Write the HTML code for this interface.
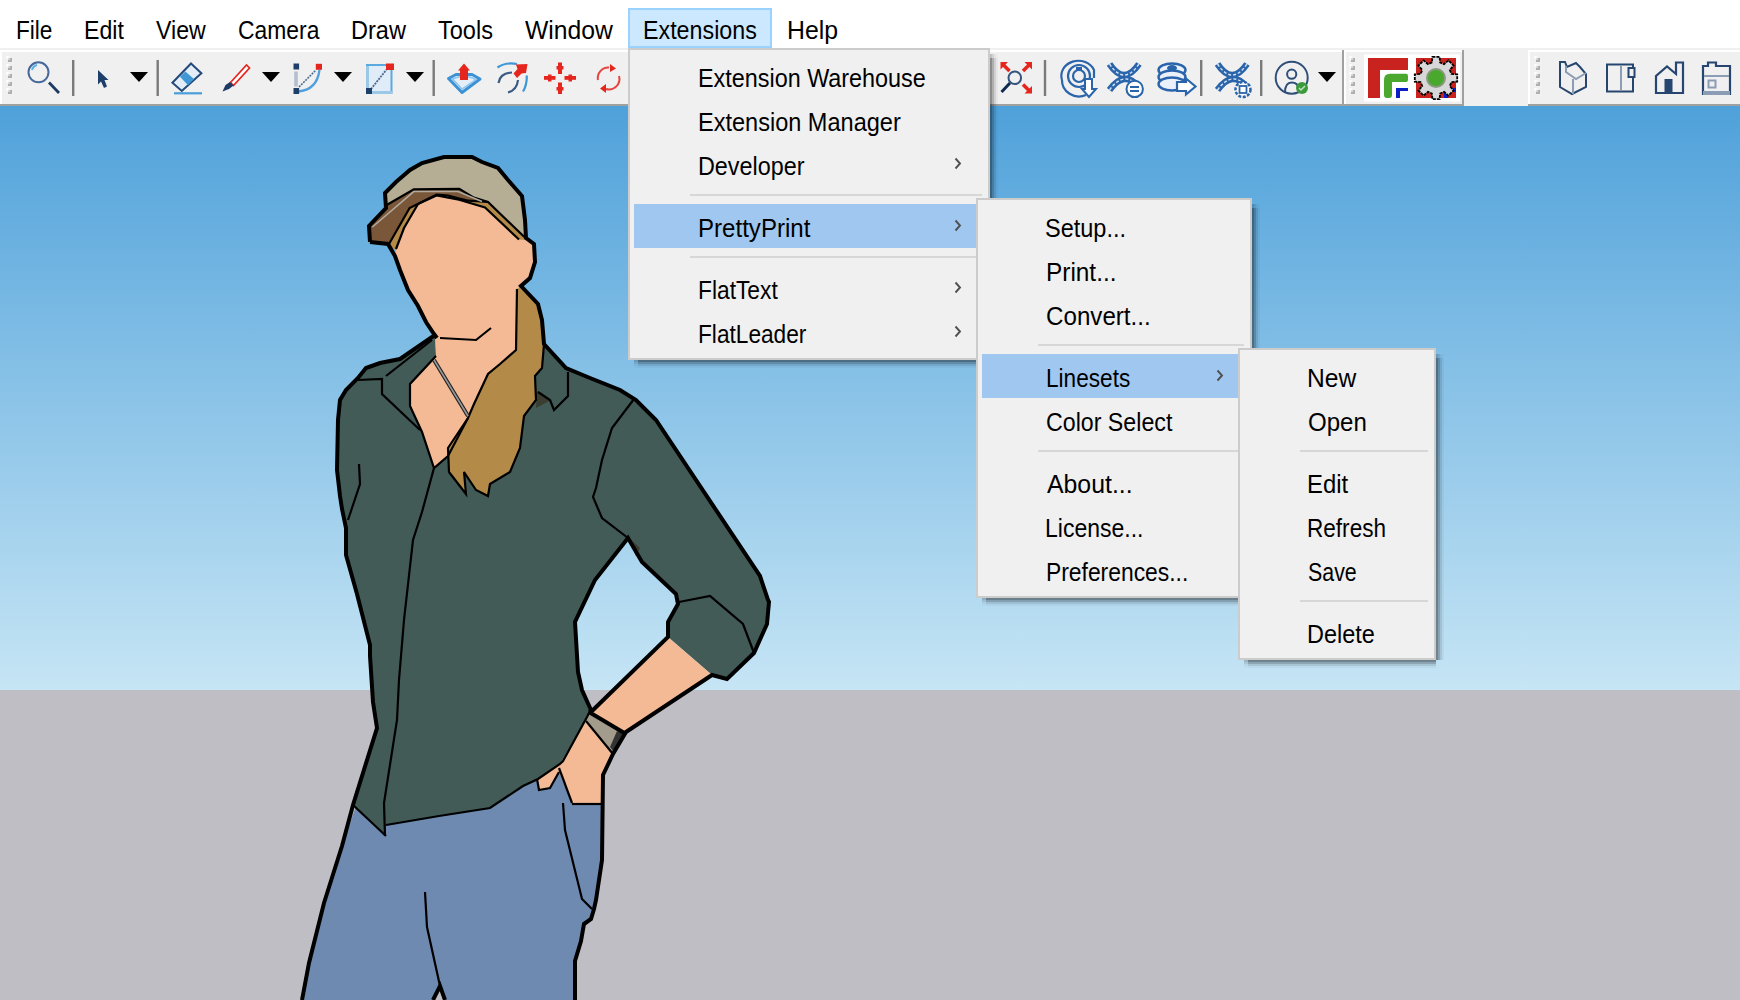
<!DOCTYPE html>
<html><head><meta charset="utf-8">
<style>
*{margin:0;padding:0;box-sizing:border-box}
html,body{width:1740px;height:1000px;overflow:hidden;background:#fff;font-family:"Liberation Sans",sans-serif;color:#000}
.a{position:absolute}
#sky{position:absolute;left:0;top:106px;width:1740px;height:584px;background:linear-gradient(#4fa1da,#c6e5f5)}
#ground{position:absolute;left:0;top:690px;width:1740px;height:310px;background:#bfbec4}
.t{position:absolute;font-size:26px;line-height:30px;white-space:pre;transform-origin:0 0;transform:scaleX(0.9)}
.tb{position:absolute;top:52px;height:52px;background:#f0f0f0}
.tbl{position:absolute;top:104px;height:2px;background:#a0a0a0}
.menu{position:absolute;background:#f0f0f0;border:2px solid #ccc}
.sh{position:absolute;background:rgba(0,0,0,0.35);filter:blur(3px)}
.hl{position:absolute;background:#9fc7f0}
.sep{position:absolute;height:2px;background:#d7d7d7}
.arr{position:absolute;width:12px;height:14px}
</style></head><body>
<div id="sky"></div>
<div id="ground"></div>

<!-- menubar -->
<div class="a" style="left:0;top:48px;width:1740px;height:2px;background:#f0f0f0"></div>
<div class="a" style="left:628px;top:8px;width:144px;height:40px;background:#cce8ff;border:2px solid #99d1ff"></div>
<div class="t" style="left:16.3px;top:15px;transform:scaleX(0.870)">File</div>
<div class="t" style="left:84.3px;top:15px;transform:scaleX(0.890)">Edit</div>
<div class="t" style="left:156.2px;top:15px;transform:scaleX(0.890)">View</div>
<div class="t" style="left:238.0px;top:15px;transform:scaleX(0.880)">Camera</div>
<div class="t" style="left:351.2px;top:15px;transform:scaleX(0.905)">Draw</div>
<div class="t" style="left:437.8px;top:15px;transform:scaleX(0.905)">Tools</div>
<div class="t" style="left:524.8px;top:15px;transform:scaleX(0.950)">Window</div>
<div class="t" style="left:643.2px;top:15px;transform:scaleX(0.895)">Extensions</div>
<div class="t" style="left:787.0px;top:15px;transform:scaleX(0.955)">Help</div>

<!-- toolbars -->
<div class="tb" style="left:2px;width:1340px"></div>
<div class="tbl" style="left:0;width:1344px"></div>
<div class="a" style="left:1342px;top:50px;width:2px;height:56px;background:#a0a0a0"></div>
<div class="tb" style="left:1346px;width:116px"></div>
<div class="tbl" style="left:1344px;width:120px"></div>
<div class="a" style="left:1462px;top:50px;width:2px;height:56px;background:#a0a0a0"></div>
<div class="a" style="left:1464px;top:50px;width:64px;height:56px;background:#f0f0f0"></div>
<div class="tb" style="left:1530px;width:210px"></div>
<div class="tbl" style="left:1528px;width:212px"></div>
<svg class="a" style="left:0;top:0" width="1740" height="110" viewBox="0 0 1740 110">
<rect x="6" y="56" width="3" height="3" fill="#fafafa"/>
<rect x="8" y="58" width="4" height="4" fill="#b0b0b0"/>
<rect x="8" y="58" width="2" height="2" fill="#d8d8d8"/>
<rect x="6" y="64" width="3" height="3" fill="#fafafa"/>
<rect x="8" y="66" width="4" height="4" fill="#b0b0b0"/>
<rect x="8" y="66" width="2" height="2" fill="#d8d8d8"/>
<rect x="6" y="72" width="3" height="3" fill="#fafafa"/>
<rect x="8" y="74" width="4" height="4" fill="#b0b0b0"/>
<rect x="8" y="74" width="2" height="2" fill="#d8d8d8"/>
<rect x="6" y="80" width="3" height="3" fill="#fafafa"/>
<rect x="8" y="82" width="4" height="4" fill="#b0b0b0"/>
<rect x="8" y="82" width="2" height="2" fill="#d8d8d8"/>
<rect x="6" y="88" width="3" height="3" fill="#fafafa"/>
<rect x="8" y="90" width="4" height="4" fill="#b0b0b0"/>
<rect x="8" y="90" width="2" height="2" fill="#d8d8d8"/>
<circle cx="38.5" cy="72.3" r="10" fill="none" stroke="#46689a" stroke-width="2"/>
<path d="M32,70 A7,7 0 0 1 37,65" fill="none" stroke="#5aaee6" stroke-width="2"/>
<line x1="49" y1="82.5" x2="59" y2="93" stroke="#1c3a64" stroke-width="2.8"/>
<rect x="72" y="60" width="2.4" height="36" fill="#7a7a7a"/>
<polygon points="98,70 98,84.5 101,81.5 104,88 107,86.5 104.5,80 108.5,80" fill="#1f3f6b"/>
<polygon points="130,72 148,72 139,82" fill="#000"/>
<rect x="156.5" y="60" width="2.4" height="36" fill="#7a7a7a"/>
<polygon points="191,63.5 201.4,73.2 181.8,91 172.4,82.7" fill="#e2edf8" stroke="#23497a" stroke-width="2"/>
<polygon points="185.3,71.5 194,79 188,85.3 180,76.7" fill="#3f97d6"/>
<rect x="174" y="92.2" width="28" height="2.2" fill="#4a9fdb"/>
<polygon points="230.5,82.5 246.5,65 249.5,68 233.5,85.5" fill="#fff" stroke="#e5261e" stroke-width="1.7"/>
<polygon points="222.5,91.5 225.5,85 230,82 233.5,85.5 229,89" fill="#1c3a64"/>
<polygon points="262,72 280,72 271,82" fill="#000"/>
<rect x="294.2" y="71.5" width="3.6" height="15" fill="#b4c0d0"/>
<line x1="299" y1="87" x2="316" y2="70" stroke="#4a6a90" stroke-width="1.6" stroke-dasharray="2,1"/>
<path d="M298,91.5 Q317,90 319.5,70" fill="none" stroke="#4fa0dc" stroke-width="2.3"/>
<rect x="293.5" y="63.5" width="5.6" height="6" fill="#1f3f6b"/>
<rect x="293.5" y="88" width="5.6" height="6" fill="#1f3f6b"/>
<rect x="315.8" y="63.8" width="6.2" height="6" fill="#e5261e"/>
<polygon points="334,72 352,72 343,82" fill="#000"/>
<rect x="367" y="65" width="24.5" height="28" fill="#e0ecf8" stroke="#5aaae0" stroke-width="2"/>
<rect x="366" y="66" width="3" height="27" fill="#9cc8e8"/>
<rect x="366" y="91" width="26" height="3" fill="#9cc8e8"/>
<line x1="371" y1="89" x2="387" y2="69" stroke="#4a6a90" stroke-width="1.8" stroke-dasharray="2,1"/>
<rect x="366" y="88" width="6" height="6" fill="#1f3f6b"/>
<rect x="386" y="63.5" width="8" height="6.5" fill="#e5261e"/>
<polygon points="406,72 424,72 415,82" fill="#000"/>
<rect x="432.5" y="60" width="2.4" height="36" fill="#7a7a7a"/>
<polygon points="448.5,78.5 456,74.5 472,74.5 480,79 462,92.5" fill="#e4eff9" stroke="#3d92d6" stroke-width="3" stroke-linejoin="round"/>
<polygon points="452.5,79 458,77 470,77 476,79.5 462,89" fill="none" stroke="#8cc4ec" stroke-width="1.5"/>
<polygon points="464,63.5 470,70.5 468,70.5 468,80 460,80 460,70.5 458,70.5" fill="#e5261e"/>
<path d="M497.5,67.5 Q505,62 517,64" fill="none" stroke="#3f97d6" stroke-width="2.2"/>
<path d="M498.5,83 Q500,73 512,72.5" fill="none" stroke="#3a5a85" stroke-width="2.2"/>
<path d="M508,92.5 Q517,90 518,80" fill="none" stroke="#3a5a85" stroke-width="2.2"/>
<path d="M523,91.5 Q527,85 526.8,75.5" fill="none" stroke="#3f97d6" stroke-width="2.2"/>
<polygon points="516,64.5 527.5,64 526,73 521.5,73.5 517,78 513.5,73.5 517.5,69" fill="#e5261e"/>
<g fill="#e5261e"><rect x="558" y="62.5" width="4" height="11.5"/><rect x="556.5" y="66" width="7" height="3.5"/><rect x="558" y="82.5" width="4" height="11.5"/><rect x="556.5" y="87" width="7" height="3.5"/><rect x="544" y="76" width="11.5" height="3.8"/><rect x="548" y="74.5" width="3.5" height="7"/><rect x="564.5" y="76" width="11.5" height="3.8"/><rect x="568.5" y="74.5" width="3.5" height="7"/></g>
<path d="M598,80 A10.5,10.5 0 0 1 609,67.5" fill="none" stroke="#e5261e" stroke-width="2" opacity="0.85"/>
<path d="M619,76 A10.5,10.5 0 0 1 606,89" fill="none" stroke="#e5261e" stroke-width="2" opacity="0.85"/>
<polygon points="610,64 616,68.5 610,72" fill="#e5261e"/>
<polygon points="606,84 600,88.5 606,93" fill="#e5261e"/>
<circle cx="1014.8" cy="77.8" r="6.3" fill="none" stroke="#35557e" stroke-width="2"/>
<line x1="1010" y1="83" x2="1001.5" y2="92" stroke="#0f2a50" stroke-width="3"/>
<polygon points="1000.5,62 1008.0,62 1000.5,69.5" fill="#e5261e"/>
<line x1="1003.5" y1="65" x2="1009.5" y2="71" stroke="#e5261e" stroke-width="3.6"/>
<polygon points="1032,62 1024.5,62 1032,69.5" fill="#e5261e"/>
<line x1="1029" y1="65" x2="1023" y2="71" stroke="#e5261e" stroke-width="3.6"/>
<polygon points="1032,93.5 1024.5,93.5 1032,86.0" fill="#e5261e"/>
<line x1="1029" y1="90.5" x2="1023" y2="84.5" stroke="#e5261e" stroke-width="3.6"/>
<rect x="1043.8" y="60" width="2.4" height="36" fill="#7a7a7a"/>
<g fill="none" stroke="#2a64aa" stroke-width="2.2"><path d="M1062,80 A17,15 0 0 1 1094,70 L1094,78"/><path d="M1062,80 A17,16 0 0 0 1086,95"/><ellipse cx="1079" cy="76" rx="11" ry="11"/><ellipse cx="1079" cy="76" rx="6" ry="6"/></g>
<polygon points="1085,79 1092,79 1092,89 1096,89 1089,97 1082,89 1085,89" fill="#fff" stroke="#2a64aa" stroke-width="2"/>
<rect x="1076" y="67" width="6" height="3" fill="#2a64aa"/>
<path d="M1109.5,64 Q1124,86 1139,64" fill="none" stroke="#2a64aa" stroke-width="6.5"/>
<path d="M1109.5,90 Q1124,70 1138,86" fill="none" stroke="#2a64aa" stroke-width="6.5"/>
<path d="M1109.5,64 Q1124,86 1139,64" fill="none" stroke="#d4e3f4" stroke-width="1.4" stroke-dasharray="3,2"/>
<path d="M1109.5,90 Q1124,70 1138,86" fill="none" stroke="#d4e3f4" stroke-width="1.4" stroke-dasharray="3,2"/>
<circle cx="1134.7" cy="88.9" r="8.2" fill="#fff" stroke="#2a64aa" stroke-width="2"/>
<path d="M1130,87 h9 M1130,91 h9" stroke="#2a64aa" stroke-width="2"/>
<ellipse cx="1172" cy="70" rx="13.5" ry="6.5" fill="#eaf1fa" stroke="#2a64aa" stroke-width="2.4"/>
<ellipse cx="1172" cy="77" rx="13.5" ry="6.5" fill="#eaf1fa" stroke="#2a64aa" stroke-width="2.4"/>
<ellipse cx="1172" cy="84" rx="13.5" ry="6.5" fill="#eaf1fa" stroke="#2a64aa" stroke-width="2.4"/>
<ellipse cx="1172" cy="68" rx="5" ry="3" fill="#2a64aa"/>
<polygon points="1177,82 1186,82 1186,78.5 1195.5,86.5 1186,94.5 1186,91 1177,91" fill="#fff" stroke="#2a64aa" stroke-width="2.2"/>
<rect x="1200" y="60" width="2.4" height="36" fill="#7a7a7a"/>
<path d="M1217.5,64 Q1232,86 1247,64" fill="none" stroke="#2a64aa" stroke-width="6.5"/>
<path d="M1217.5,90 Q1232,70 1246,86" fill="none" stroke="#2a64aa" stroke-width="6.5"/>
<path d="M1217.5,64 Q1232,86 1247,64" fill="none" stroke="#d4e3f4" stroke-width="1.4" stroke-dasharray="3,2"/>
<path d="M1217.5,90 Q1232,70 1246,86" fill="none" stroke="#d4e3f4" stroke-width="1.4" stroke-dasharray="3,2"/>
<circle cx="1243" cy="89.5" r="7.5" fill="#fff" stroke="#2a64aa" stroke-width="2.5" stroke-dasharray="3,1.5"/>
<rect x="1239.5" y="86" width="7" height="7" fill="none" stroke="#2a64aa" stroke-width="1.8"/>
<rect x="1260" y="60" width="2.4" height="36" fill="#7a7a7a"/>
<circle cx="1291.7" cy="77.7" r="16" fill="none" stroke="#2f4e78" stroke-width="2"/>
<circle cx="1291.7" cy="74.2" r="4.6" fill="none" stroke="#2f4e78" stroke-width="2"/>
<path d="M1285,92.5 Q1285,82.5 1291.7,82.5 Q1298,82.5 1298,88" fill="none" stroke="#2f4e78" stroke-width="2"/>
<circle cx="1302" cy="88" r="6" fill="#3c9a3c"/>
<path d="M1299,88 l2,2 l4,-4" fill="none" stroke="#bfe3bf" stroke-width="1.5"/>
<polygon points="1318,72 1336,72 1327,82" fill="#000"/>
<rect x="1364" y="54.5" width="96" height="47" fill="#fff"/>
<rect x="1349" y="56" width="3" height="3" fill="#fafafa"/>
<rect x="1351" y="58" width="4" height="4" fill="#b0b0b0"/>
<rect x="1351" y="58" width="2" height="2" fill="#d8d8d8"/>
<rect x="1349" y="64" width="3" height="3" fill="#fafafa"/>
<rect x="1351" y="66" width="4" height="4" fill="#b0b0b0"/>
<rect x="1351" y="66" width="2" height="2" fill="#d8d8d8"/>
<rect x="1349" y="72" width="3" height="3" fill="#fafafa"/>
<rect x="1351" y="74" width="4" height="4" fill="#b0b0b0"/>
<rect x="1351" y="74" width="2" height="2" fill="#d8d8d8"/>
<rect x="1349" y="80" width="3" height="3" fill="#fafafa"/>
<rect x="1351" y="82" width="4" height="4" fill="#b0b0b0"/>
<rect x="1351" y="82" width="2" height="2" fill="#d8d8d8"/>
<rect x="1349" y="88" width="3" height="3" fill="#fafafa"/>
<rect x="1351" y="90" width="4" height="4" fill="#b0b0b0"/>
<rect x="1351" y="90" width="2" height="2" fill="#d8d8d8"/>
<path d="M1368,58 H1408 V70 H1380 V98 H1368 Z" fill="#c8231e"/>
<path d="M1384,95 V80 Q1384,73.8 1390,73.8 H1406 Q1408,73.8 1408,76 V80 Q1408,82 1406,82 H1392 V95 Q1392,98 1389,98 H1387 Q1384,98 1384,95 Z" fill="#4aa82e"/>
<path d="M1396,98 V88 H1408 V91 H1400 V98 Z" fill="#0a1ec8"/>
<rect x="1416" y="58" width="40" height="40" fill="#c8231e"/>
<rect x="1444" y="88" width="12" height="4" fill="#0a1ec8"/>
<rect x="1444" y="88" width="4" height="10" fill="#0a1ec8"/>
<polygon points="1432.4,56.8 1439.6,56.8 1440.1,62.5 1444.0,64.2 1448.4,60.4 1453.6,65.6 1449.8,70.0 1451.5,73.9 1457.2,74.4 1457.2,81.6 1451.5,82.1 1449.8,86.0 1453.6,90.4 1448.4,95.6 1444.0,91.8 1440.1,93.5 1439.6,99.2 1432.4,99.2 1431.9,93.5 1428.0,91.8 1423.6,95.6 1418.4,90.4 1422.2,86.0 1420.5,82.1 1414.8,81.6 1414.8,74.4 1420.5,73.9 1422.2,70.0 1418.4,65.6 1423.6,60.4 1428.0,64.2 1431.9,62.5" fill="#d8d8d8" stroke="#000" stroke-width="1.8" stroke-dasharray="3,1"/>
<circle cx="1436" cy="78" r="9" fill="#4aa82e" stroke="#8a9a80" stroke-width="2"/>
<rect x="1534" y="56" width="3" height="3" fill="#fafafa"/>
<rect x="1536" y="58" width="4" height="4" fill="#b0b0b0"/>
<rect x="1536" y="58" width="2" height="2" fill="#d8d8d8"/>
<rect x="1534" y="64" width="3" height="3" fill="#fafafa"/>
<rect x="1536" y="66" width="4" height="4" fill="#b0b0b0"/>
<rect x="1536" y="66" width="2" height="2" fill="#d8d8d8"/>
<rect x="1534" y="72" width="3" height="3" fill="#fafafa"/>
<rect x="1536" y="74" width="4" height="4" fill="#b0b0b0"/>
<rect x="1536" y="74" width="2" height="2" fill="#d8d8d8"/>
<rect x="1534" y="80" width="3" height="3" fill="#fafafa"/>
<rect x="1536" y="82" width="4" height="4" fill="#b0b0b0"/>
<rect x="1536" y="82" width="2" height="2" fill="#d8d8d8"/>
<rect x="1534" y="88" width="3" height="3" fill="#fafafa"/>
<rect x="1536" y="90" width="4" height="4" fill="#b0b0b0"/>
<rect x="1536" y="90" width="2" height="2" fill="#d8d8d8"/>
<g fill="none" stroke="#27466f" stroke-width="2"><path d="M1560,62 L1565,62 L1567,67 L1576,63 L1580,67 L1586,74 L1586,87 L1572,94 L1560,87 Z"/><path d="M1566,66 L1566,72 L1576,79 L1586,73" stroke="#8a9db5"/><path d="M1573,79 V94" stroke="#8a9db5"/></g>
<rect x="1607" y="64.5" width="26" height="27" fill="none" stroke="#27466f" stroke-width="2"/>
<line x1="1621" y1="65" x2="1621" y2="91" stroke="#8a9db5" stroke-width="2"/>
<rect x="1628.5" y="68" width="6" height="9" fill="#f0f0f0" stroke="#27466f" stroke-width="2"/>
<path d="M1656,93 V76 L1667,66.5 L1676,74 V62.5 H1683 V93 Z" fill="none" stroke="#27466f" stroke-width="2.2"/>
<rect x="1664.5" y="79" width="8" height="14" fill="#27466f"/>
<path d="M1703,94 V66 H1708 V62.5 H1716 V66 H1730 V94 Z" fill="none" stroke="#27466f" stroke-width="2.2"/>
<line x1="1704" y1="76" x2="1729" y2="76" stroke="#8a9db5" stroke-width="2"/>
<rect x="1708.5" y="80.5" width="7" height="7" fill="none" stroke="#8a9db5" stroke-width="2"/>
<rect x="1703" y="91" width="27" height="4" fill="#8a9db5"/>
</svg>

<!-- figure -->
<svg class="a" style="left:0;top:0" width="1740" height="1000" viewBox="0 0 1740 1000" id="fig">
<polygon points="355,809 386,790 540,760 603,775 602,860 596,900 594,909 591,919 584,924 581,941 575,961 575,1000 445,1000 440,986 433,1000 302,1000 309,963 324,903 342,846" fill="#6e8ab0"/>
<polygon points="400,359 380,363 366,368 358,378 346,390 340,400 338,420 337,470 340,496 342,509 346,528 346,555 357,594 370,645 370,656 373,702 377,728 353,805 386,836 386,825 439,816 490,808 523,786 538,779 560,764 563,761 587,717 591,710 582,690 578,672 575,622 595,580 628,538 642,562 676,594 678,604 668,622 668,637 712,675 727,679 754,653 767,624 769,602 762,580 656,420 636,400 620,390 590,378 566,368 544,344 500,364 436,356 435,335" fill="#435b57"/>
<polygon points="593,710 668,637 712,675 626,732 613,754 603,775 601,804 572,803 559,772 550,788 539,790 537,779 560,764 587,717" fill="#f4ba96"/>
<polygon points="589,712 626,734 613,754 586,721" fill="#a39b8c"/>
<polygon points="617,731 626,734 614,752 610,747" fill="#333"/>
<polygon points="388,246 409.6,208 436.5,194.5 488,201.7 524.4,237 528,242 521,242 396,250" fill="#b48a48"/>
<polygon points="396,250 404,228 418,204 436,195.5 448,196.5 459,199.6 470,203 485,207.5 519,239.5 527,240 534,246 535,262 530,278 521,286 517,289 516,350 500,364 468,418 448,456 434,468 422,432 410,406 410,384 436,356 435,335 434,334 426,322 418,306 408,290 400,270 395,256" fill="#f4ba96"/>
<polygon points="521,286 538,304 542,320 544,344 542,368 535,376 536,400 524,416 520,448 510,472 490,484 488,496 476,490 464,472 466,494 449,472 448,448 468,418 474,404 488,374 516,350 517,289" fill="#b48a48"/>
<polygon points="385,193 396,182 410,170 422,163 444,157 472,157 482,162 498,168 508,180 522,196 525,220 526,238 524.4,237 488,202 473.8,197.6 459.3,188.8 413.8,189.3 385,205.5" fill="#b5ae94"/>
<polygon points="369.3,225.5 385.9,209 385,205.5 413.8,189.3 459.3,188.8 473.8,197.6 488.2,201.7 468.6,200.7 459.3,198.6 448,195.5 436.5,194.5 409.6,208 389,244 370.3,242" fill="#7a5738"/>
<polygon points="537,391 551,400 536,408" fill="#3b3d30"/>
<polygon points="628,537 640,548 636,556" fill="#3b3d30"/>
<polyline points="370,242 369,226 386,208 385,193 396,182 410,170 422,163 444,157 472,157 482,162 498,168 508,180 522,196 525,220 526,238 534,244 535,262 530,278 521,286 538,304 542,320 544,344 566,368 590,378 620,390 636,400 656,420 760,576 768,600 769,602 767,624 754,653 727,679 712,675 626,732 613,754 603,775 602,860 596,900 594,909 591,919 584,924 581,941 575,961 575,1000" fill="none" stroke="#000" stroke-width="4" stroke-linejoin="miter" stroke-miterlimit="3"/>
<polyline points="370,242 388,244 395,256 400,270 408,290 418,306 426,322 434,334 437,338" fill="none" stroke="#000" stroke-width="4" stroke-linejoin="miter" stroke-miterlimit="3"/>
<polyline points="435,335 400,359 380,363 366,368 358,378 346,390 340,400 338,420 337,470 340,496 342,509 346,528 346,555 357,594 370,645 370,656 373,702 377,728 353,805 342,846 324,903 309,963 302,1000" fill="none" stroke="#000" stroke-width="4" stroke-linejoin="miter" stroke-miterlimit="3"/>
<polyline points="590,711 591,710 582,690 578,672 575,622 595,580 628,538 642,562 676,594 678,604 668,622 668,637 593,710 589,712" fill="none" stroke="#000" stroke-width="4" stroke-linejoin="miter" stroke-miterlimit="3"/>
<polyline points="589,712 626,734" fill="none" stroke="#000" stroke-width="4" stroke-linejoin="miter" stroke-miterlimit="3"/>
<polyline points="433,1000 440,986 445,1000" fill="none" stroke="#000" stroke-width="4" stroke-linejoin="miter" stroke-miterlimit="3"/>
<polyline points="440,338 476,340 491,328" fill="none" stroke="#000" stroke-width="2.2"/>
<polyline points="517,289 516,350 500,364 488,374 474,404 468,418 448,448 449,472 466,494 464,472 476,490 488,496 490,484 510,472 520,448 524,416 536,400 535,376 542,368 544,344" fill="none" stroke="#000" stroke-width="2.2"/>
<polyline points="436,356 410,384 410,406 422,432 434,468 448,456 468,418" fill="none" stroke="#000" stroke-width="2.2"/>
<polyline points="434,468 422,512 413,540 404,620 399,680 397,720 384,803 385,836" fill="none" stroke="#000" stroke-width="2.2"/>
<polyline points="359,464 360,484 348,520" fill="none" stroke="#000" stroke-width="2.2"/>
<polyline points="634,399 612,428 602,460 596,488 593,497 602,518 628,538" fill="none" stroke="#000" stroke-width="2.2"/>
<polyline points="679,602 710,596 743,624 754,653" fill="none" stroke="#000" stroke-width="2.2"/>
<polyline points="563,803 565,830 582,899 592,909" fill="none" stroke="#000" stroke-width="2.2"/>
<polyline points="572,804 601,804" fill="none" stroke="#000" stroke-width="2.2"/>
<polyline points="425,892 427,927 440,986" fill="none" stroke="#000" stroke-width="2.2"/>
<polyline points="386,836 353,805" fill="none" stroke="#000" stroke-width="2.2"/>
<polyline points="386,825 439,816 490,808 523,786 538,779 560,764 563,761 587,717 590,711" fill="none" stroke="#000" stroke-width="2.2"/>
<polyline points="358,380 382,379 382,394 420,430" fill="none" stroke="#000" stroke-width="2.2"/>
<polyline points="386,376 432,340" fill="none" stroke="#000" stroke-width="2.2"/>
<polyline points="568,372 568,396 554,410 550,400 538,392" fill="none" stroke="#000" stroke-width="2.2"/>
<polyline points="586,721 613,754" fill="none" stroke="#000" stroke-width="2.2"/>
<polyline points="385,206 413.8,189.3 459.3,188.8 473.8,197.6 488,202 524.4,237" fill="none" stroke="#000" stroke-width="2.2"/>
<polyline points="389,244 409.6,208 436.5,194.5 448,195.5 459.3,198.6 468.6,200.7 488,202" fill="none" stroke="#000" stroke-width="2.2"/>
<polyline points="396,249 404,228 418,204 436.5,195.5 459,199.6 470,203 485,207.5 519,239.5" fill="none" stroke="#000" stroke-width="2.2"/>
<polyline points="537,779 539,790 550,788 559,772" fill="none" stroke="#000" stroke-width="2.2"/>
<polyline points="559,768 572,803" fill="none" stroke="#000" stroke-width="2.2"/>
<polyline points="372.4,227 413.8,191.6 458,191.6 482,201.5" fill="none" stroke="#b0aba0" stroke-width="1.5"/>
<polyline points="434,360 468,416" fill="none" stroke="#222" stroke-width="4"/>
<polyline points="434,360 468,416" fill="none" stroke="#999" stroke-width="1.6"/>
</svg>

<!--MENUS-->
<div class="a" style="left:990px;top:58px;width:8px;height:302px;background:linear-gradient(to right,rgba(0,0,0,.42) 0 2px, rgba(0,0,0,.27) 2px 4px, rgba(0,0,0,.13) 4px 6px, rgba(0,0,0,.04) 6px 8px)"></div><div class="a" style="left:990px;top:54px;width:8px;height:4px;background:linear-gradient(to right,rgba(0,0,0,.2) 0 2px, rgba(0,0,0,.12) 2px 4px, rgba(0,0,0,.05) 4px 6px, rgba(0,0,0,.02) 6px 8px)"></div><div class="a" style="left:638px;top:360px;width:352px;height:8px;background:linear-gradient(to bottom,rgba(0,0,0,.42) 0 2px, rgba(0,0,0,.27) 2px 4px, rgba(0,0,0,.13) 4px 6px, rgba(0,0,0,.04) 6px 8px)"></div><div class="a" style="left:634px;top:360px;width:4px;height:8px;background:linear-gradient(to bottom,rgba(0,0,0,.2) 0 2px, rgba(0,0,0,.12) 2px 4px, rgba(0,0,0,.05) 4px 6px, rgba(0,0,0,.02) 6px 8px)"></div>
<div class="menu" style="left:628px;top:48px;width:362px;height:312px"></div>
<div class="t" style="left:697.6px;top:63px;transform:scaleX(0.899)">Extension Warehouse</div>
<div class="t" style="left:697.6px;top:107px;transform:scaleX(0.905)">Extension Manager</div>
<div class="t" style="left:697.7px;top:151px;transform:scaleX(0.898)">Developer</div>
<svg class="a" style="left:953px;top:157px" width="10" height="14" viewBox="0 0 10 14"><polyline points="2.5,1.5 7,6.5 2.5,11.5" fill="none" stroke="#505050" stroke-width="1.9"/></svg>
<div class="sep" style="left:690px;top:194px;width:292px"></div>
<div class="hl" style="left:634px;top:204px;width:350px;height:44px"></div>
<div class="t" style="left:697.6px;top:213px;transform:scaleX(0.926)">PrettyPrint</div>
<svg class="a" style="left:953px;top:219px" width="10" height="14" viewBox="0 0 10 14"><polyline points="2.5,1.5 7,6.5 2.5,11.5" fill="none" stroke="#505050" stroke-width="1.9"/></svg>
<div class="sep" style="left:690px;top:256px;width:292px"></div>
<div class="t" style="left:697.7px;top:275px;transform:scaleX(0.876)">FlatText</div>
<svg class="a" style="left:953px;top:281px" width="10" height="14" viewBox="0 0 10 14"><polyline points="2.5,1.5 7,6.5 2.5,11.5" fill="none" stroke="#505050" stroke-width="1.9"/></svg>
<div class="t" style="left:697.8px;top:319px;transform:scaleX(0.872)">FlatLeader</div>
<svg class="a" style="left:953px;top:325px" width="10" height="14" viewBox="0 0 10 14"><polyline points="2.5,1.5 7,6.5 2.5,11.5" fill="none" stroke="#505050" stroke-width="1.9"/></svg>
<div class="a" style="left:1252px;top:208px;width:8px;height:390px;background:linear-gradient(to right,rgba(0,0,0,.42) 0 2px, rgba(0,0,0,.27) 2px 4px, rgba(0,0,0,.13) 4px 6px, rgba(0,0,0,.04) 6px 8px)"></div><div class="a" style="left:1252px;top:204px;width:8px;height:4px;background:linear-gradient(to right,rgba(0,0,0,.2) 0 2px, rgba(0,0,0,.12) 2px 4px, rgba(0,0,0,.05) 4px 6px, rgba(0,0,0,.02) 6px 8px)"></div><div class="a" style="left:986px;top:598px;width:266px;height:8px;background:linear-gradient(to bottom,rgba(0,0,0,.42) 0 2px, rgba(0,0,0,.27) 2px 4px, rgba(0,0,0,.13) 4px 6px, rgba(0,0,0,.04) 6px 8px)"></div><div class="a" style="left:982px;top:598px;width:4px;height:8px;background:linear-gradient(to bottom,rgba(0,0,0,.2) 0 2px, rgba(0,0,0,.12) 2px 4px, rgba(0,0,0,.05) 4px 6px, rgba(0,0,0,.02) 6px 8px)"></div>
<div class="menu" style="left:976px;top:198px;width:276px;height:400px"></div>
<div class="t" style="left:1045.4px;top:213px;transform:scaleX(0.904)">Setup...</div>
<div class="t" style="left:1045.6px;top:257px;transform:scaleX(0.938)">Print...</div>
<div class="t" style="left:1045.9px;top:301px;transform:scaleX(0.929)">Convert...</div>
<div class="sep" style="left:1038px;top:344px;width:206px"></div>
<div class="hl" style="left:982px;top:354px;width:264px;height:44px"></div>
<div class="t" style="left:1045.8px;top:363px;transform:scaleX(0.87)">Linesets</div>
<svg class="a" style="left:1215px;top:369px" width="10" height="14" viewBox="0 0 10 14"><polyline points="2.5,1.5 7,6.5 2.5,11.5" fill="none" stroke="#505050" stroke-width="1.9"/></svg>
<div class="t" style="left:1045.6px;top:407px;transform:scaleX(0.892)">Color Select</div>
<div class="sep" style="left:1038px;top:450px;width:206px"></div>
<div class="t" style="left:1046.5px;top:469px;transform:scaleX(0.955)">About...</div>
<div class="t" style="left:1045.4px;top:513px;transform:scaleX(0.885)">License...</div>
<div class="t" style="left:1045.7px;top:557px;transform:scaleX(0.879)">Preferences...</div>
<div class="a" style="left:1436px;top:358px;width:8px;height:302px;background:linear-gradient(to right,rgba(0,0,0,.42) 0 2px, rgba(0,0,0,.27) 2px 4px, rgba(0,0,0,.13) 4px 6px, rgba(0,0,0,.04) 6px 8px)"></div><div class="a" style="left:1436px;top:354px;width:8px;height:4px;background:linear-gradient(to right,rgba(0,0,0,.2) 0 2px, rgba(0,0,0,.12) 2px 4px, rgba(0,0,0,.05) 4px 6px, rgba(0,0,0,.02) 6px 8px)"></div><div class="a" style="left:1248px;top:660px;width:188px;height:8px;background:linear-gradient(to bottom,rgba(0,0,0,.42) 0 2px, rgba(0,0,0,.27) 2px 4px, rgba(0,0,0,.13) 4px 6px, rgba(0,0,0,.04) 6px 8px)"></div><div class="a" style="left:1244px;top:660px;width:4px;height:8px;background:linear-gradient(to bottom,rgba(0,0,0,.2) 0 2px, rgba(0,0,0,.12) 2px 4px, rgba(0,0,0,.05) 4px 6px, rgba(0,0,0,.02) 6px 8px)"></div>
<div class="menu" style="left:1238px;top:348px;width:198px;height:312px"></div>
<div class="t" style="left:1307.1px;top:363px;transform:scaleX(0.946)">New</div>
<div class="t" style="left:1308.1px;top:407px;transform:scaleX(0.926)">Open</div>
<div class="sep" style="left:1300px;top:450px;width:128px"></div>
<div class="t" style="left:1307.2px;top:469px;transform:scaleX(0.918)">Edit</div>
<div class="t" style="left:1307.3px;top:513px;transform:scaleX(0.868)">Refresh</div>
<div class="t" style="left:1308.2px;top:557px;transform:scaleX(0.822)">Save</div>
<div class="sep" style="left:1300px;top:600px;width:128px"></div>
<div class="t" style="left:1307.2px;top:619px;transform:scaleX(0.902)">Delete</div>
<!--/MENUS-->
</body></html>
